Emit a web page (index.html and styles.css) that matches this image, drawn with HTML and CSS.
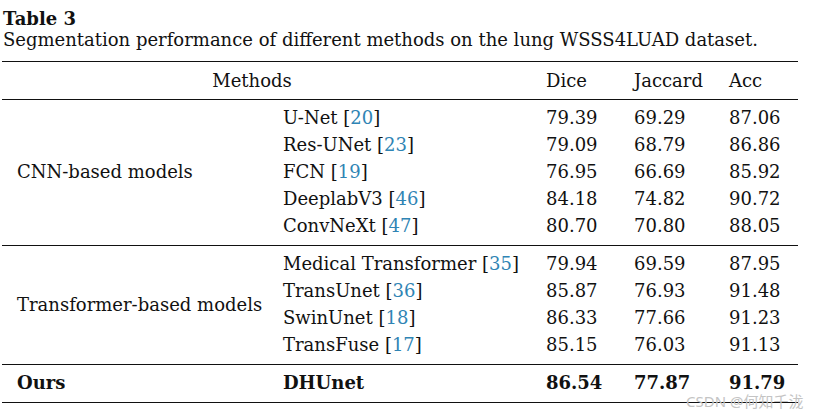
FILE: index.html
```html
<!DOCTYPE html>
<html lang="en">
<head>
<meta charset="utf-8">
<title>Table 3</title>
<link rel="stylesheet" href="styles.css">
</head>
<body>
<div class="page">
  <h1 class="title">Table 3</h1>
  <p class="caption">Segmentation performance of different methods on the lung WSSS4LUAD dataset.</p>
  <div class="table">
    <div class="grid head">
      <div class="methods">Methods</div>
      <div>Dice</div>
      <div>Jaccard</div>
      <div>Acc</div>
    </div>
    <div class="grid group">
      <div class="family f5">CNN-based models</div>
      <div>U-Net <span class="br">[<a>20</a>]</span></div><div>79.39</div><div>69.29</div><div>87.06</div>
      <div>Res-UNet <span class="br">[<a>23</a>]</span></div><div>79.09</div><div>68.79</div><div>86.86</div>
      <div>FCN <span class="br">[<a>19</a>]</span></div><div>76.95</div><div>66.69</div><div>85.92</div>
      <div>DeeplabV3 <span class="br">[<a>46</a>]</span></div><div>84.18</div><div>74.82</div><div>90.72</div>
      <div>ConvNeXt <span class="br">[<a>47</a>]</span></div><div>80.70</div><div>70.80</div><div>88.05</div>
    </div>
    <div class="grid group">
      <div class="family f4">Transformer-based models</div>
      <div>Medical Transformer <span class="br">[<a>35</a>]</span></div><div>79.94</div><div>69.59</div><div>87.95</div>
      <div>TransUnet <span class="br">[<a>36</a>]</span></div><div>85.87</div><div>76.93</div><div>91.48</div>
      <div>SwinUnet <span class="br">[<a>18</a>]</span></div><div>86.33</div><div>77.66</div><div>91.23</div>
      <div>TransFuse <span class="br">[<a>17</a>]</span></div><div>85.15</div><div>76.03</div><div>91.13</div>
    </div>
    <div class="grid group ours">
      <div class="family">Ours</div>
      <div>DHUnet</div><div>86.54</div><div>77.87</div><div>91.79</div>
    </div>
  </div>
  <div class="watermark">CSDN @何知千泷</div>
</div>
</body>
</html>
```

FILE: styles.css
```css
html, body {
  margin: 0;
  padding: 0;
  background: #ffffff;
}

.page {
  position: relative;
  width: 814px;
  height: 416px;
  overflow: hidden;
  font-family: "DejaVu Serif", "Liberation Serif", serif;
  font-size: 18px;
  color: #111111;
}

.title {
  margin: 0;
  padding: 8px 0 0 3px;
  font-size: 18px;
  font-weight: bold;
  line-height: 21px;
}

.caption {
  margin: 0;
  padding: 0 0 0 3px;
  line-height: 22px;
  word-spacing: 0;
}

.table {
  margin: 10px 0 0 2px;
  width: 796px;
  border-top: 1px solid #111;
}

.grid {
  display: grid;
  grid-template-columns: 266px 263px 88px 95px 1fr;
  padding-left: 15px;
  line-height: 27px;
  border-bottom: 1px solid #111;
}

.head {
  padding-top: 5px;
  padding-bottom: 5px;
}

.head .methods {
  grid-column: 1 / 3;
  text-align: center;
  padding-right: 59px;
}

.group {
  padding-top: 4px;
  padding-bottom: 6px;
}

.family {
  grid-column: 1;
  align-self: center;
}

.f5 { grid-row: 1 / 6; }
.f4 { grid-row: 1 / 5; }

.ours {
  font-weight: bold;
}

.br a {
  color: #2f84b4;
  text-decoration: none;
}

.watermark {
  position: absolute;
  left: 686px;
  top: 392px;
  font-family: "Noto Sans", "Noto Sans CJK SC", sans-serif;
  font-size: 15px;
  line-height: 18px;
  color: #c4c4c4;
}
```
